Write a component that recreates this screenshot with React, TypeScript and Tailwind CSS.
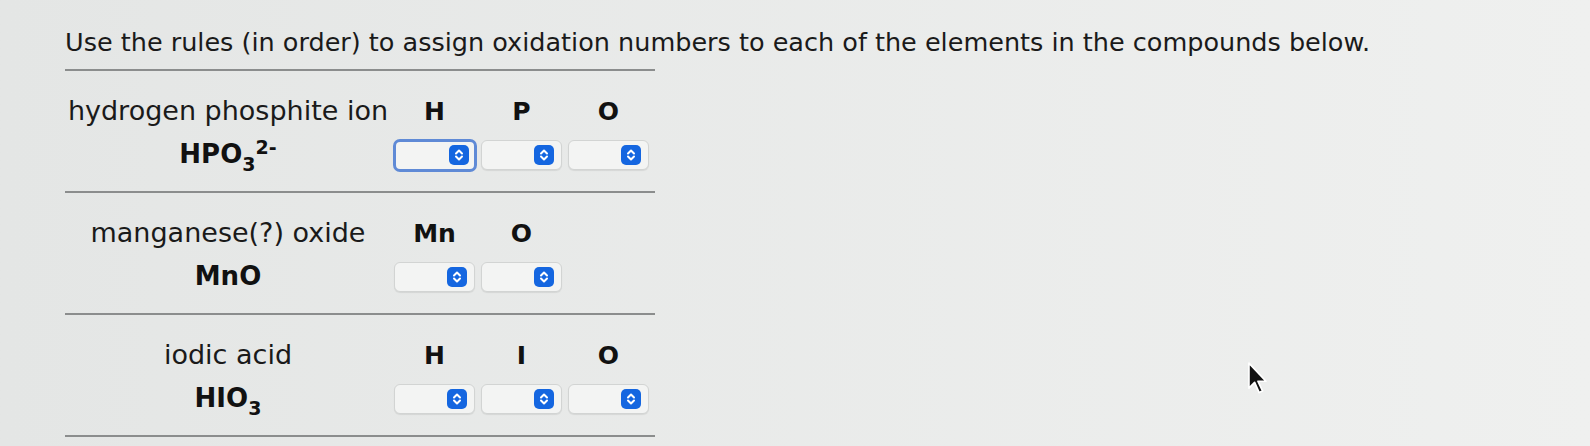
import React from 'react';

type Compound = {
  name: string;
  formula: React.ReactNode;
  elements: string[];
};

const compounds: Compound[] = [
  {
    name: 'hydrogen phosphite ion',
    formula: (
      <>
        HPO<sub className="text-[19px] relative top-[2px] align-sub">3</sub>
        <sup className="text-[19px] relative top-[1px] align-super">2-</sup>
      </>
    ),
    elements: ['H', 'P', 'O'],
  },
  { name: 'manganese(?) oxide', formula: <>MnO</>, elements: ['Mn', 'O'] },
  {
    name: 'iodic acid',
    formula: (
      <>
        HIO<sub className="text-[19px] relative top-[2px] align-sub">3</sub>
      </>
    ),
    elements: ['H', 'I', 'O'],
  },
];

const StepperIcon = () => (
  <svg width="12" height="14" viewBox="0 0 12 14" fill="none">
    <path d="M3 5.5 L6 2.5 L9 5.5" stroke="white" strokeWidth="2" strokeLinecap="round" strokeLinejoin="round" />
    <path d="M3 8.5 L6 11.5 L9 8.5" stroke="white" strokeWidth="2" strokeLinecap="round" strokeLinejoin="round" />
  </svg>
);

const Select = ({ focused }: { focused?: boolean }) => (
  <div
    className={
      focused
        ? 'flex items-center justify-end w-[84px] h-[33px] pr-[5px] rounded-[7px] bg-[#f3f4f3] border-[3px] border-[#5f8ad6]'
        : 'flex items-center justify-end w-[81px] h-[30px] pr-[7px] rounded-[6px] bg-[#f3f4f3] border border-[#d2d4d3] shadow-[0_1px_1px_rgba(0,0,0,0.08)]'
    }
  >
    <div className="flex items-center justify-center w-[20px] h-[20px] rounded-[5px] bg-[#1466e0]">
      <StepperIcon />
    </div>
  </div>
);

const CompoundRow = ({ c, first }: { c: Compound; first: boolean }) => (
  <div className="border-t-2 border-[#8b8d8d] pt-[20px] pb-[14px]">
    <div className="grid grid-cols-[326px_87px_87px_87px] items-center h-[40px]">
      <div className="text-center text-[27px] whitespace-nowrap text-[#1a1a1a]">{c.name}</div>
      {c.elements.map((el) => (
        <div key={el} className="text-center text-[25px] font-bold text-[#111]">
          {el}
        </div>
      ))}
    </div>
    <div className="grid grid-cols-[326px_87px_87px_87px] items-center h-[46px]">
      <div className="text-center text-[26px] font-bold text-[#111] leading-none whitespace-nowrap">{c.formula}</div>
      {c.elements.map((el, i) => (
        <div key={el} className="flex justify-center pt-[2px]">
          <Select focused={first && i === 0} />
        </div>
      ))}
    </div>
  </div>
);

export default function App() {
  return (
    <div
      className="relative h-[446px] w-[1590px] overflow-hidden bg-linear-to-r from-[#e4e6e5] to-[#eff0ef] pl-[65px]"
      style={{ fontFamily: '"DejaVu Sans", Verdana, sans-serif' }}
    >
      <div className="pt-[28px] text-[25.5px] leading-[28px] text-[#1a1a1a]">
        Use the rules (in order) to assign oxidation numbers to each of the elements in the compounds below.
      </div>
      <div className="mt-[13px] w-[590px] border-b-2 border-[#8b8d8d]">
        {compounds.map((c, i) => (
          <CompoundRow key={c.name} c={c} first={i === 0} />
        ))}
      </div>

      {/* mouse pointer */}
      <svg className="absolute left-[1246px] top-[362px]" width="24" height="34" viewBox="0 0 20 30">
        <path
          d="M2 1 L2 23 L7 18 L11 27 L14 25.5 L10 17 L17 17 Z"
          fill="#111"
          stroke="white"
          strokeWidth="1.5"
          strokeLinejoin="round"
        />
      </svg>
    </div>
  );
}
